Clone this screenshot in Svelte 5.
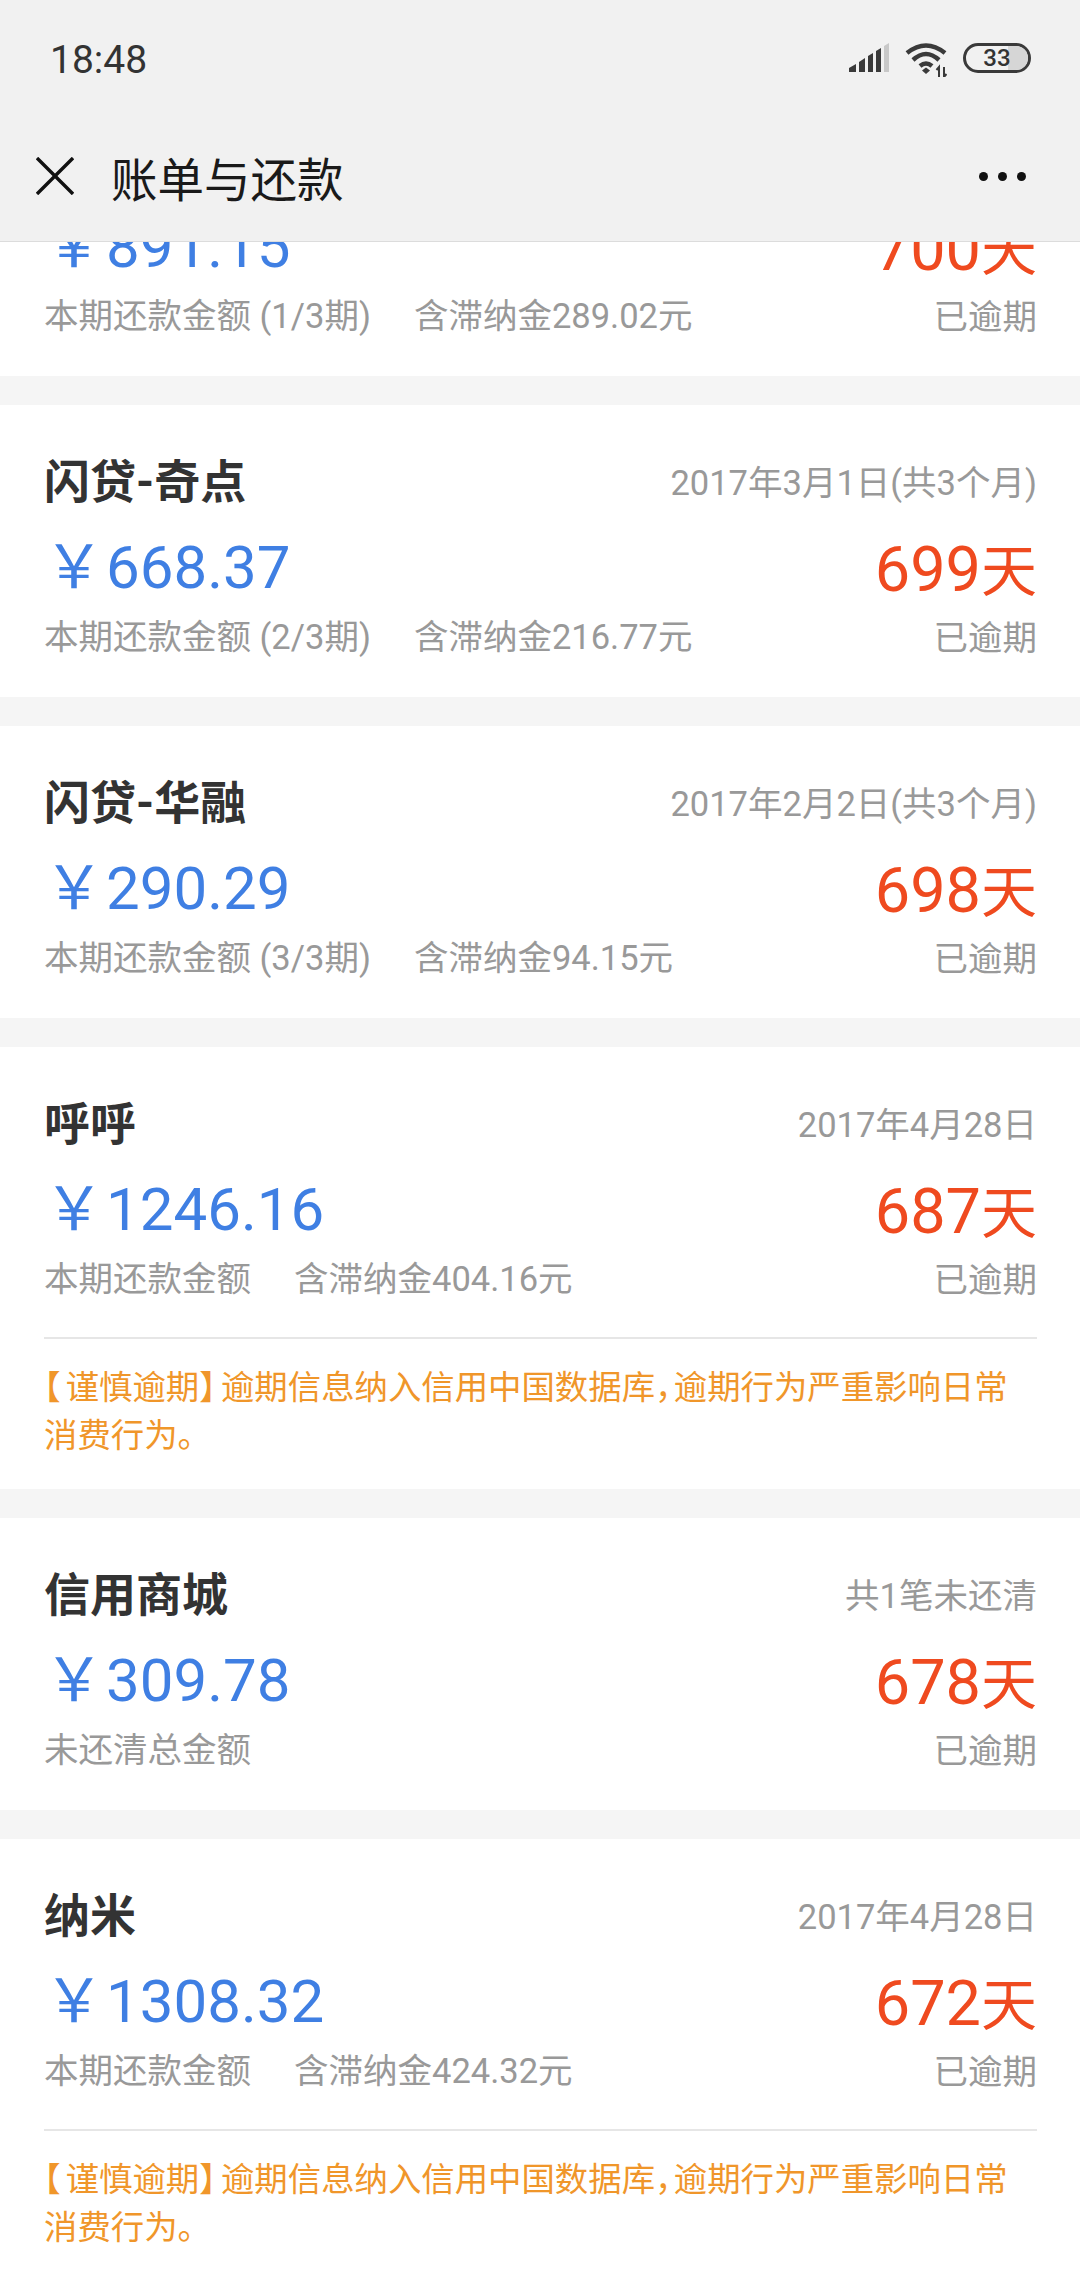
<script>
  const bills = [
    { title: '闪贷-奇点', meta: '2017年3月1日(共3个月)', amount: '668.37', label: '本期还款金额 (2/3期)', fee: '含滞纳金216.77元', days: 699 },
    { title: '闪贷-华融', meta: '2017年2月2日(共3个月)', amount: '290.29', label: '本期还款金额 (3/3期)', fee: '含滞纳金94.15元', days: 698 },
    { title: '呼呼', meta: '2017年4月28日', amount: '1246.16', label: '本期还款金额', fee: '含滞纳金404.16元', days: 687, warn: true },
    { title: '信用商城', meta: '共1笔未还清', amount: '309.78', label: '未还清总金额', fee: '', days: 678 },
    { title: '纳米', meta: '2017年4月28日', amount: '1308.32', label: '本期还款金额', fee: '含滞纳金424.32元', days: 672, warn: true },
  ];
</script>

<div class="screen">
  <header>
    <div class="status">
      <span class="time">18:48</span>
      <div class="indicators">
        <svg width="40" height="34" viewBox="0 0 40 34">
          <polygon points="0,29 0,25 7,21 7,29" fill="#3a3a3a" />
          <polygon points="10,29 10,19 16,15 16,29" fill="#3a3a3a" />
          <polygon points="19,29 19,13 24,10 24,29" fill="#3a3a3a" />
          <polygon points="27,29 27,8 32,5 32,29" fill="#3a3a3a" />
          <polygon points="35,29 35,3 40,0 40,29" fill="#c8c8c8" />
        </svg>
        <svg width="42" height="34" viewBox="0 0 42 34">
          <path d="M2 10 Q21 -5 40 10" fill="none" stroke="#3a3a3a" stroke-width="4.5" />
          <path d="M8 17 Q21 5 34 17" fill="none" stroke="#3a3a3a" stroke-width="4.5" />
          <path d="M15 23 Q21 18 27 23" fill="none" stroke="#3a3a3a" stroke-width="4.5" />
          <path d="M17 27.5 L21 24.5 L25 27.5 L21 31Z" fill="#3a3a3a" />
          <path d="M34 34 V24 L31.5 27 M39 24 V34 L41.5 31" fill="none" stroke="#3a3a3a" stroke-width="2" />
        </svg>
        <div class="battery">
          <div class="level"></div>
          <span>33</span>
        </div>
      </div>
    </div>
    <div class="toolbar">
      <svg class="close" width="38" height="38" viewBox="0 0 38 38">
        <path d="M1 1 L37 37 M37 1 L1 37" stroke="#111" stroke-width="3.4" fill="none" />
      </svg>
      <span class="page-title">账单与还款</span>
      <div class="more"><i></i><i></i><i></i></div>
    </div>
  </header>

  <section class="card clipped">
    <div class="row middle">
      <span class="amount"><span class="yen">￥</span>891.15</span>
      <span class="days">700<span class="unit">天</span></span>
    </div>
    <div class="row bottom">
      <div class="sub"><span>本期还款金额 (1/3期)</span><span>含滞纳金289.02元</span></div>
      <span class="state">已逾期</span>
    </div>
  </section>

  {#each bills as bill}
    <section class="card" class:warned={bill.warn}>
      <div class="row top">
        <span class="name">{bill.title}</span>
        <span class="meta">{bill.meta}</span>
      </div>
      <div class="row middle">
        <span class="amount"><span class="yen">￥</span>{bill.amount}</span>
        <span class="days">{bill.days}<span class="unit">天</span></span>
      </div>
      <div class="row bottom">
        <div class="sub">
          <span>{bill.label}</span>
          {#if bill.fee}<span>{bill.fee}</span>{/if}
        </div>
        <span class="state">已逾期</span>
      </div>
      {#if bill.warn}
        <p class="warning"><span class="open">【</span>谨慎逾期<span class="shut">】</span>逾期信息纳入信用中国数据库<span class="comma">，</span>逾期行为严重影响日常消费行为。</p>
      {/if}
    </section>
  {/each}
</div>

<style>
  :global(body) {
    background: #f5f5f5;
  }
  .screen {
    height: 2280px;
    overflow: hidden;
    display: flex;
    flex-direction: column;
    gap: 29px;
    font-family: 'Roboto', 'Noto Sans CJK SC', sans-serif;
  }
  header {
    height: 242px;
    margin-bottom: -29px;
    flex-shrink: 0;
    background: #f1f1f1;
    border-bottom: 1px solid #dcdcdc;
    box-sizing: border-box;
  }
  .status {
    height: 120px;
    padding: 0 49px 0 50px;
    display: flex;
    justify-content: space-between;
    align-items: center;
  }
  .time {
    font-size: 39px;
    color: #333;
  }
  .indicators {
    display: flex;
    align-items: flex-start;
    gap: 16px;
  }
  .battery {
    position: relative;
    width: 68px;
    height: 30px;
    box-sizing: border-box;
    border: 3px solid #3a3a3a;
    border-radius: 15px;
    overflow: hidden;
    display: flex;
    align-items: center;
    justify-content: center;
    font-size: 24px;
    font-weight: 500;
    color: #333;
  }
  .level {
    position: absolute;
    right: 0;
    top: 0;
    bottom: 0;
    width: 20px;
    background: #d6d6d6;
  }
  .battery span {
    position: relative;
  }
  .toolbar {
    height: 112px;
    padding: 0 54px 0 36px;
    display: flex;
    align-items: center;
  }
  .close {
    margin-right: 37px;
  }
  .page-title {
    flex: 1;
    font-size: 46.5px;
    color: #1a1a1a;
  }
  .more {
    display: flex;
    gap: 10px;
  }
  .more i {
    width: 9px;
    height: 9px;
    border-radius: 50%;
    background: #111;
  }
  .card {
    flex-shrink: 0;
    background: #fff;
    padding: 0 43px 0 44px;
    height: 292px;
    box-sizing: border-box;
    display: flex;
    flex-direction: column;
  }
  .card.warned {
    height: 442px;
  }
  .clipped {
    height: 134px;
    overflow: hidden;
    justify-content: flex-end;
    padding-bottom: 32px;
  }
  .row {
    display: flex;
    justify-content: space-between;
    flex-shrink: 0;
    box-sizing: border-box;
  }
  .top {
    align-items: center;
    height: 74px;
    margin-top: 38px;
  }
  .middle {
    height: 86px;
    align-items: center;
    padding-top: 2px;
  }
  .bottom {
    height: 62px;
    align-items: center;
    padding-top: 2px;
  }
  .name {
    font-size: 46px;
    font-weight: 700;
    color: #333;
    padding-bottom: 4px;
  }
  .meta {
    font-size: 34.5px;
    color: #999;
  }
  .amount {
    font-size: 60px;
    color: #3f7fe3;
  }
  .yen {
    font-size: 60px;
    margin-right: 2px;
  }
  .days {
    font-size: 63px;
    color: #ef4a1f;
    padding-top: 11px;
  }
  .unit {
    font-size: 56px;
  }
  .sub {
    display: flex;
    gap: 43px;
    font-size: 34.5px;
    color: #999;
    padding-bottom: 2px;
  }
  .state {
    font-size: 34.5px;
    color: #999;
  }
  .warning {
    margin: 30px 0 0;
    padding-top: 25px;
    border-top: 2px solid #e6e6e6;
    font-size: 33.4px;
    line-height: 48px;
    color: #f0962a;
    font-feature-settings: 'halt';
  }
  .open {
    padding-right: 5px;
  }
  .shut {
    padding-right: 5px;
  }
  .comma {
    padding-right: 2px;
  }
</style>
